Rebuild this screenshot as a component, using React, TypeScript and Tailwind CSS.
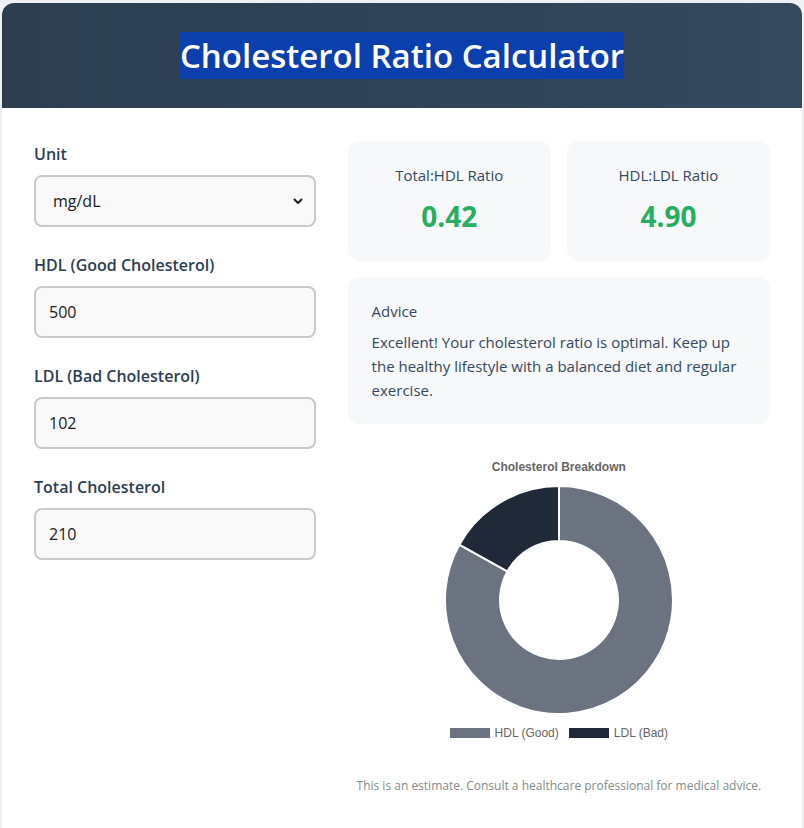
import React from "react";

function arcPath(cx: number, cy: number, R: number, r: number, a0: number, a1: number) {
  const rad = (d: number) => (d * Math.PI) / 180;
  const p = (rr: number, a: number) => [cx + rr * Math.sin(rad(a)), cy - rr * Math.cos(rad(a))];
  const large = a1 - a0 > 180 ? 1 : 0;
  const [x0, y0] = p(R, a0);
  const [x1, y1] = p(R, a1);
  const [x2, y2] = p(r, a1);
  const [x3, y3] = p(r, a0);
  return `M${x0} ${y0} A${R} ${R} 0 ${large} 1 ${x1} ${y1} L${x2} ${y2} A${r} ${r} 0 ${large} 0 ${x3} ${y3} Z`;
}

function Donut() {
  const hdl = 500;
  const ldl = 102;
  const a = (hdl / (hdl + ldl)) * 360;
  const c = 115;
  return (
    <svg width="230" height="230" viewBox="0 0 230 230">
      <path d={arcPath(c, c, 114, 59, 0, a)} fill="#6b7280" stroke="#ffffff" strokeWidth="2" strokeLinejoin="round" />
      <path d={arcPath(c, c, 114, 59, a, 360)} fill="#1f2937" stroke="#ffffff" strokeWidth="2" strokeLinejoin="round" />
    </svg>
  );
}

function Field({ label, value }: { label: string; value: string }) {
  return (
    <div className="flex flex-col">
      <label className="text-[16px] leading-[28px] font-semibold text-[#2c3e50] mb-[7px]">{label}</label>
      <div className="h-[52px] rounded-lg border-2 border-[#c8c9cb] bg-[#f9f9f9] flex items-center pl-[13px] text-[16px] text-[#1a1a1a]">
        {value}
      </div>
    </div>
  );
}

export default function App() {
  return (
    <div className="min-h-screen bg-[#eef0f4] pt-[3px]" style={{ fontFamily: '"Open Sans", "Noto Sans", sans-serif' }}>
      <div className="mx-auto w-[800px] bg-white rounded-xl overflow-hidden">
        <div className="h-[105px] bg-linear-to-r from-[#2c3e50] to-[#34495e] flex items-center justify-center">
          <h1 className="text-[33px] font-semibold text-white leading-[47px]">
            <span className="bg-[#0b3fae] inline-block">Cholesterol Ratio Calculator</span>
          </h1>
        </div>
        <div className="grid grid-cols-[2fr_3fr] gap-8 px-8 pt-8 pb-16">
          <div className="flex flex-col gap-[24px]">
            <div className="flex flex-col">
              <label className="text-[16px] leading-[28px] font-semibold text-[#2c3e50] mb-[7px]">Unit</label>
              <div className="h-[52px] rounded-lg border-2 border-[#c8c9cb] bg-[#f9f9f9] flex items-center justify-between pl-[17px] pr-[11px] text-[16px] text-[#1a1a1a]">
                <span>mg/dL</span>
                <svg width="10" height="7" viewBox="0 0 10 7">
                  <path d="M1.5 1.5 L5 5 L8.5 1.5" fill="none" stroke="#222" strokeWidth="2" strokeLinecap="round" strokeLinejoin="round" />
                </svg>
              </div>
            </div>
            <Field label="HDL (Good Cholesterol)" value="500" />
            <Field label="LDL (Bad Cholesterol)" value="102" />
            <Field label="Total Cholesterol" value="210" />
          </div>
          <div className="flex flex-col">
            <div className="grid grid-cols-2 gap-4 mt-[1px]">
              <div className="h-[120px] rounded-xl bg-[#f7f8fa] flex flex-col items-center pt-[23px]">
                <div className="text-[15px] leading-[22px] text-[#34495e]">Total:HDL Ratio</div>
                <div className="text-[28px] leading-[38px] font-bold text-[#27ae60] mt-[11px]">0.42</div>
              </div>
              <div className="h-[120px] rounded-xl bg-[#f7f8fa] flex flex-col items-center pt-[23px]">
                <div className="text-[15px] leading-[22px] text-[#34495e]">HDL:LDL Ratio</div>
                <div className="text-[28px] leading-[38px] font-bold text-[#27ae60] mt-[11px]">4.90</div>
              </div>
            </div>
            <div className="mt-4 rounded-xl bg-[#f7f8fa] h-[147px] px-6 pt-[22px] text-[#34495e]">
              <div className="text-[15px] leading-[24px]">Advice</div>
              <p className="text-[15px] leading-[24px] mt-[7px]">
                Excellent! Your cholesterol ratio is optimal. Keep up the healthy lifestyle with a balanced diet and regular exercise.
              </p>
            </div>
            <div className="flex flex-col items-center mt-[35px]" style={{ fontFamily: '"Liberation Sans", Arial, sans-serif' }}>
              <div className="text-[12px] leading-[16px] font-bold text-[#666666]">Cholesterol Breakdown</div>
              <div className="mt-[10px]">
                <Donut />
              </div>
              <div className="flex items-center gap-[10px] mt-[11px] text-[12px] leading-[14px] text-[#666666]">
                <div className="flex items-center gap-[5px]">
                  <span className="w-[40px] h-[10px] bg-[#6b7280] inline-block" />
                  <span>HDL (Good)</span>
                </div>
                <div className="flex items-center gap-[5px]">
                  <span className="w-[40px] h-[10px] bg-[#1f2937] inline-block" />
                  <span>LDL (Bad)</span>
                </div>
              </div>
            </div>
            <div className="text-center text-[12px] leading-[16px] text-[#7f8c8d] mt-[38px]">
              This is an estimate. Consult a healthcare professional for medical advice.
            </div>
          </div>
        </div>
      </div>
    </div>
  );
}
